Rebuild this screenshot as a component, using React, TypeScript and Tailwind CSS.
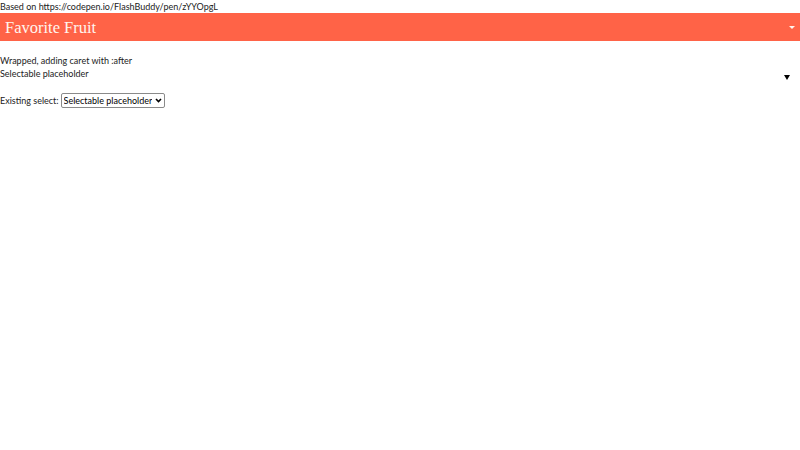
export default function App() {
  return (
    <div className="min-h-[450px] bg-white text-[#222] font-['Lato',sans-serif] text-[9px] leading-[13px]">
      <div className="h-[13px]">Based on https://codepen.io/FlashBuddy/pen/zYYOpgL</div>

      {/* banner with caret */}
      <div className="relative h-[28px] bg-[#ff6347] flex items-center px-[5px]">
        <span className="font-['Liberation_Serif',serif] text-[16.5px] text-[#fff5ee]">Favorite Fruit</span>
        <span className="absolute right-[5px] top-[13px] w-0 h-0 border-l-[3px] border-r-[3px] border-t-[3px] border-l-transparent border-r-transparent border-t-[#fff5ee]" />
      </div>

      <div className="mt-[13px]">Wrapped, adding caret with :after</div>
      <div className="relative">
        <div>Selectable placeholder</div>
        <span className="absolute right-[10px] top-[8px] w-0 h-0 border-l-[3.5px] border-r-[3.5px] border-t-[5px] border-l-transparent border-r-transparent border-t-black" />
      </div>

      <div className="mt-[13px] flex items-center gap-[2px]">
        <span>Existing select:</span>
        <div className="relative">
          <select className="appearance-none h-[15px] w-[104px] border border-[#8a8a8a] rounded-[2px] text-[9px] leading-[13px] pl-[2px] pr-[12px] text-black bg-white font-['Lato',sans-serif]" defaultValue="p">
            <option value="p">Selectable placeholder</option>
          </select>
          <svg className="pointer-events-none absolute right-[3px] top-[5px]" width="7" height="5" viewBox="0 0 7 5">
            <path d="M1 1 L3.5 3.5 L6 1" fill="none" stroke="black" strokeWidth="1.6" />
          </svg>
        </div>
      </div>
    </div>
  );
}
